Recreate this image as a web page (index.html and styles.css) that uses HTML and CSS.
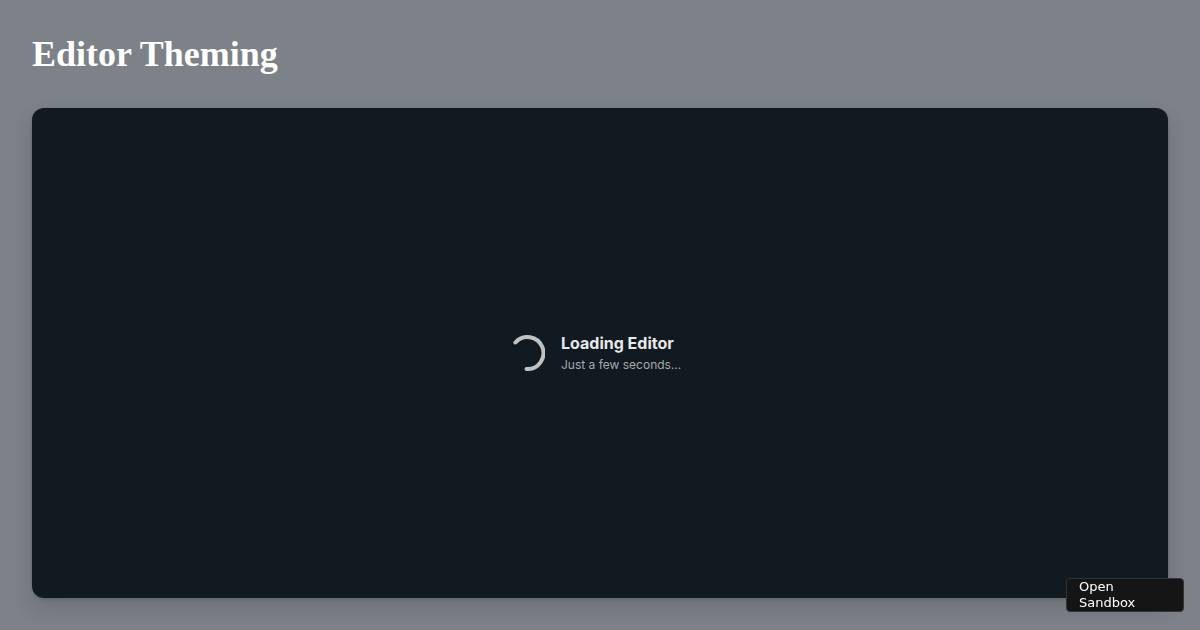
FILE: index.html
```html
<!DOCTYPE html>
<html lang="en">
<head>
<meta charset="utf-8">
<title>Editor Theming</title>
<link rel="stylesheet" href="styles.css">
</head>
<body>
<main class="page">
  <h1 class="title">Editor Theming</h1>
  <section class="editor">
    <div class="loader" role="status">
      <svg class="spinner" viewBox="0 0 36 36" fill="none" aria-hidden="true">
        <path d="M6.4 7.5A16 16 0 1 1 17.5 34" stroke="currentColor" stroke-width="4" stroke-linecap="round"/>
      </svg>
      <div class="message">
        <p class="heading">Loading Editor</p>
        <p class="note">Just a few seconds...</p>
      </div>
    </div>
  </section>
</main>
<button class="sandbox" type="button">Open Sandbox</button>
</body>
</html>
```
FILE: styles.css
```css
* {
  box-sizing: border-box;
}

body {
  margin: 0;
  background: #7d8188;
}

.page {
  display: flex;
  flex-direction: column;
  gap: 32px;
  min-height: 100vh;
  padding: 32px;
}

.title {
  margin: 0;
  color: #fff;
  font: bold 36px/44px "Liberation Serif", serif;
}

.editor {
  display: flex;
  flex: 1;
  align-items: center;
  justify-content: center;
  border-radius: 12px;
  background: #121a21;
  box-shadow: 0 1px 3px rgba(18, 36, 44, 0.2), 0 10px 20px rgba(18, 36, 44, 0.16);
}

.loader {
  display: flex;
  align-items: center;
  gap: 16px;
}

.spinner {
  width: 36px;
  height: 36px;
  color: #bfc1c2;
}

.message {
  min-width: 130px;
  font-family: Inter, sans-serif;
}

.heading {
  margin: 0;
  color: #e7e8e9;
  font-size: 16px;
  font-weight: 700;
  line-height: 24px;
}

.note {
  margin: 0;
  color: #a5a9ac;
  font-size: 12px;
  line-height: 20px;
}

.sandbox {
  position: fixed;
  right: 16px;
  bottom: 18px;
  width: 118px;
  padding: 0 12px;
  border: 1px solid #303436;
  border-radius: 4px;
  background: #151515;
  color: #fff;
  font: 13px/16px "DejaVu Sans", sans-serif;
  text-align: left;
}
```
